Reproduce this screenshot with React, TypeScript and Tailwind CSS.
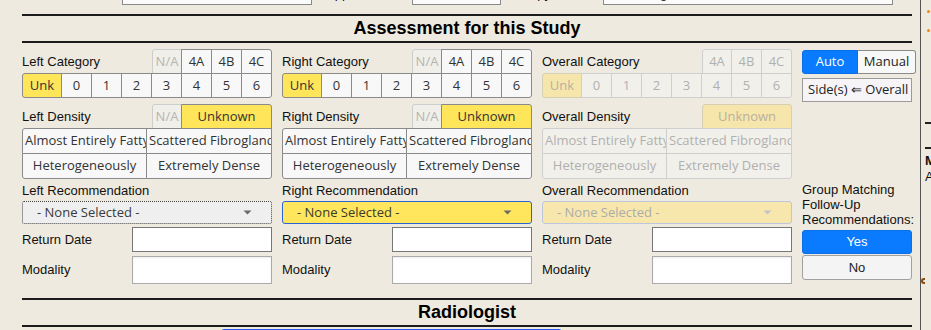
import React from 'react';

const label = "font-['Liberation_Sans',Arial,sans-serif] text-[13px] text-[#111]";
const btnText = "font-['Open_Sans',sans-serif] text-[13px]";

type Tone = 'on' | 'off' | 'na' | 'dim' | 'dimOn';

const tones: Record<Tone, string> = {
  on: 'bg-[#ffe55a] border-[#8a8a8a] text-[#333]',
  off: 'bg-[#f8f8f8] border-[#8a8a8a] text-[#333]',
  na: 'bg-[#f1efe9] border-[#cdcdcd] text-[#b4b4b4]',
  dim: 'bg-[#f2f0ea] border-[#cfcfcf] text-[#b0b0b0]',
  dimOn: 'bg-[#f7e6ab] border-[#d8d0b4] text-[#b8b0a0]',
};

function Cell({
  text,
  tone,
  className = '',
}: {
  text: string;
  tone: Tone;
  className?: string;
}) {
  return (
    <div
      className={`flex items-center justify-center overflow-hidden whitespace-nowrap border px-[2px] ${btnText} ${tones[tone]} ${className}`}
    >
      <span className="shrink-0">{text}</span>
    </div>
  );
}

function Caret({ color }: { color: string }) {
  return (
    <svg width="9" height="5" viewBox="0 0 9 5" className="mr-[19px] shrink-0">
      <path d="M0.5 0.5h8L4.5 4.5z" fill={color} />
    </svg>
  );
}

function Column({ side, dim }: { side: string; dim?: boolean }) {
  const off: Tone = dim ? 'dim' : 'off';
  const sel: Tone = dim ? 'dimOn' : 'on';
  const nums = ['0', '1', '2', '3', '4', '5', '6'];

  const selectCls = dim
    ? 'bg-[#f7e7ad] border border-[#bcc6dc] text-[#acacac] rounded-[3px]'
    : side === 'Right'
      ? 'bg-[#ffe65c] border border-[#2a63d4] text-[#3b3a2c] rounded-[3px]'
      : 'bg-[#efefef] border border-dotted border-[#444] text-[#3a3a3a] rounded-[2px]';

  return (
    <div className="flex flex-col">
      <div className="flex h-[25px] items-center justify-between">
        <span className={label}>{side} Category</span>
        <div className="flex h-[25px]">
          {!dim && <Cell text="N/A" tone="na" className="w-[30px] rounded-tl-[3px]" />}
          {['4A', '4B', '4C'].map((t, i) => (
            <Cell
              key={t}
              text={t}
              tone={off}
              className={`${i === 0 && dim ? 'w-[30px] rounded-tl-[3px]' : 'w-[31px] -ml-px'} ${i === 2 ? 'rounded-tr-[3px]' : ''}`}
            />
          ))}
        </div>
      </div>
      <div className="-mt-px flex h-[25px]">
        <Cell text="Unk" tone={sel} className="w-[40px] rounded-l-[3px]" />
        {nums.map((n, i) => (
          <Cell
            key={n}
            text={n}
            tone={off}
            className={`w-[31px] -ml-px ${i === 6 ? 'rounded-br-[3px]' : ''}`}
          />
        ))}
      </div>

      <div className="mt-[6px] flex h-[25px] items-center justify-between">
        <span className={label}>{side} Density</span>
        <div className="flex h-[25px]">
          {!dim && <Cell text="N/A" tone="na" className="w-[30px] rounded-tl-[3px]" />}
          <Cell
            text="Unknown"
            tone={sel}
            className={`rounded-tr-[3px] ${dim ? 'w-[90px] rounded-tl-[3px]' : 'w-[91px] -ml-px'}`}
          />
        </div>
      </div>
      <div className="-mt-px grid grid-cols-[125px_125px]">
        <Cell text="Almost Entirely Fatty" tone={off} className="h-[26px] justify-start rounded-tl-[3px]" />
        <Cell text="Scattered Fibroglandular" tone={off} className="-ml-px h-[26px] w-[126px] justify-start" />
        <Cell text="Heterogeneously" tone={off} className="-mt-px h-[26px] rounded-bl-[3px]" />
        <Cell text="Extremely Dense" tone={off} className="-ml-px -mt-px h-[26px] w-[126px] rounded-br-[3px]" />
      </div>

      <div className={`mt-[3px] h-[18px] leading-[18px] ${label}`}>{side} Recommendation</div>
      <div className={`mt-[1px] flex h-[23px] items-center justify-between ${selectCls}`}>
        <span className={`pl-[14px] ${btnText}`}>- None Selected -</span>
        <Caret color={dim ? '#c4c4c4' : '#6a6a6a'} />
      </div>

      <div className="mt-[3px] flex h-[25px] items-center justify-between">
        <span className={label}>Return Date</span>
        <div className="h-[25px] w-[140px] border border-[#767676] bg-white" />
      </div>
      <div className="mt-[4px] flex h-[28px] items-center justify-between">
        <span className={label}>Modality</span>
        <div className="h-[28px] w-[140px] border border-[#ababab] bg-white shadow-[inset_0_1px_2px_rgba(0,0,0,0.08)]" />
      </div>
    </div>
  );
}

function Rule() {
  return <div className="h-[2px] bg-[#1c1c1c]" />;
}

export default function App() {
  return (
    <div className="flex h-[330px] w-[931px] items-start overflow-hidden bg-[#eeeadf]">
      <div className="ml-[22px] w-[890px] shrink-0">
        {/* tail of the section above */}
        <div className="flex h-[5px] items-end overflow-hidden">
          <div className="ml-[100px] h-[24px] w-[190px] shrink-0 border border-[#8a8a8a] bg-[#fbfbfb]" />
          <span className={`mb-[4px] ml-[14px] shrink-0 leading-[14px] ${label}`}>Appt</span>
          <div className="ml-[59px] h-[24px] w-[89px] shrink-0 border border-[#8a8a8a] bg-[#fbfbfb]" />
          <span className={`mb-[4px] ml-[20px] shrink-0 leading-[14px] ${label}`}>Copy</span>
          <div className="ml-[52px] flex h-[24px] w-[290px] shrink-0 items-end border border-[#8a8a8a] bg-[#fbfbfb] pl-[56px]">
            <span className={`mb-[3px] leading-[14px] ${label}`}>g</span>
          </div>
        </div>

        <div className="mt-[9px]">
          <Rule />
        </div>
        <div className="flex h-[25px] items-center justify-center font-['Liberation_Sans',Arial,sans-serif] text-[18px] font-bold text-black">
          Assessment for this Study
        </div>
        <Rule />

        <div className="mt-[6px] grid grid-cols-[250px_250px_250px_110px] gap-x-[10px]">
          <Column side="Left" />
          <Column side="Right" />
          <Column side="Overall" dim />

          <div className="flex flex-col">
            <div className="mt-[1px] flex h-[24px] w-[114px]">
              <div className={`flex w-[56px] items-center justify-center rounded-l-[3px] border border-[#0a6ee6] bg-[#0a7bff] text-white ${btnText}`}>
                Auto
              </div>
              <div className={`flex flex-1 items-center justify-center rounded-r-[3px] border border-l-0 border-[#8a8a8a] bg-[#f8f8f8] text-[#222] ${btnText}`}>
                Manual
              </div>
            </div>
            <div className={`mt-[4px] flex h-[24px] items-center overflow-hidden whitespace-nowrap border border-[#9a9a9a] bg-[#f6f4f7] pl-[5px] text-[#222] ${btnText}`}>
              <span className="shrink-0">Side(s) ⇐ Overall</span>
            </div>

            <div className={`mt-[80px] whitespace-nowrap leading-[15px] ${label}`}>
              <div>Group Matching</div>
              <div>Follow-Up</div>
              <div>Recommendations:</div>
            </div>
            <div className={`mt-[3px] flex h-[24px] items-center justify-center rounded-[3px] border border-[#0a6ee6] bg-[#0a7bff] text-white ${label}`}>
              Yes
            </div>
            <div className={`mt-[1px] flex h-[25px] items-center justify-center rounded-[3px] border border-[#a0a0a0] bg-[#f4f4f4] text-[#222] ${label}`}>
              No
            </div>
          </div>
        </div>

        <div className="mt-[14px]">
          <Rule />
        </div>
        <div className="flex h-[25px] items-center justify-center font-['Liberation_Sans',Arial,sans-serif] text-[18px] font-bold text-black">
          Radiologist
        </div>
        <Rule />
        <div className="ml-[199px] mt-[2px] h-[20px] w-[341px] rounded-[3px] border border-[#2a58e8] bg-[#ffe65c]" />
      </div>

      {/* divider and the edge of the next panel */}
      <div className="ml-[8px] h-[330px] w-px shrink-0 bg-[#555]" />
      <div className={`flex flex-1 flex-col pl-[4px] ${label}`}>
        <div className="mt-[10px] ml-[2px] h-[3px] w-[3px] rounded-full bg-[#f08a12]" />
        <div className="mt-[16px] ml-[2px] h-[3px] w-[3px] rounded-full bg-[#f08a12]" />
        <div className="mt-[90px] h-[2px] bg-[#222]" />
        <div className="mt-[23px] h-[2px] bg-[#222]" />
        <div className="mt-[4px] font-bold leading-[16px]">M</div>
        <div className="leading-[15px]">A</div>
        <div className="-ml-[4px] mt-[94px] h-[6px] w-[4px] rounded-l-full border-2 border-r-0 border-[#8a4a10]" />
      </div>
    </div>
  );
}
